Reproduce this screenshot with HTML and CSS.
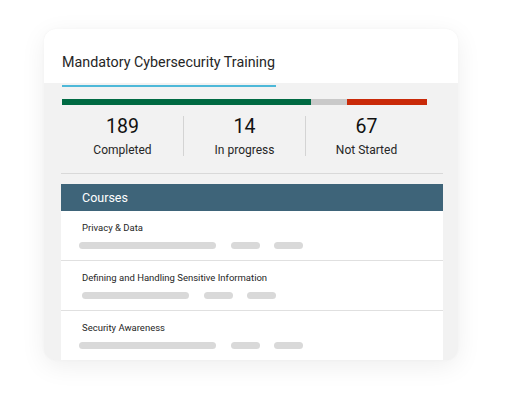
FILE: index.html
```html
<!DOCTYPE html>
<html>
<head>
<meta charset="utf-8">
<link rel="stylesheet" href="styles.css">
</head>
<body>
<div class="card">
  <div class="header">
    <div class="title">Mandatory Cybersecurity Training</div>
  </div>
  <div class="tab-line"></div>
  <div class="progress">
    <div class="seg green"></div>
    <div class="seg gray"></div>
    <div class="seg red"></div>
  </div>
  <div class="stats">
    <div class="stat">
      <div class="num">189</div>
      <div class="label">Completed</div>
    </div>
    <div class="stat divided">
      <div class="num">14</div>
      <div class="label">In progress</div>
    </div>
    <div class="stat divided">
      <div class="num">67</div>
      <div class="label">Not Started</div>
    </div>
  </div>
  <div class="rule"></div>
  <div class="courses">
    <div class="courses-head">Courses</div>
    <div class="row">
      <div class="row-title">Privacy &amp; Data</div>
      <div class="bars">
        <span class="bar long"></span><span class="bar short"></span><span class="bar short"></span>
      </div>
    </div>
    <div class="row">
      <div class="row-title">Defining and Handling Sensitive Information</div>
      <div class="bars inset">
        <span class="bar mid"></span><span class="bar short"></span><span class="bar short"></span>
      </div>
    </div>
    <div class="row">
      <div class="row-title">Security Awareness</div>
      <div class="bars">
        <span class="bar long"></span><span class="bar short"></span><span class="bar short"></span>
      </div>
    </div>
  </div>
</div>
</body>
</html>
```
FILE: styles.css
```css
html, body {
  margin: 0;
  padding: 0;
  background: #ffffff;
}
body {
  font-family: "Roboto", "Liberation Sans", sans-serif;
  color: #1e1e1e;
  width: 512px;
  height: 400px;
  overflow: hidden;
}
.card {
  margin: 29px 0 0 44px;
  width: 414px;
  height: 331px;
  background: #f2f2f2;
  border-radius: 12px;
  overflow: hidden;
  box-shadow: 0 6px 26px rgba(0, 0, 0, 0.07), 0 0 3px rgba(0, 0, 0, 0.03);
}
.header {
  background: #ffffff;
  height: 54px;
  padding-left: 18px;
  display: flex;
  align-items: center;
}
.title {
  font-size: 14.3px;
  color: #262626;
  padding-top: 11px;
}
.tab-line {
  margin: 2px 0 0 18px;
  width: 214px;
  height: 2px;
  background: #4db8d8;
}
.progress {
  display: flex;
  margin: 12px 0 0 18px;
  width: 365px;
  height: 6px;
}
.seg { height: 100%; }
.green { width: 249px; background: #006a43; }
.gray { width: 36px; background: #c9c9c9; }
.red { width: 80px; background: #c92a09; }
.stats {
  display: flex;
  margin: 11px 0 0 18px;
  width: 365px;
}
.stat {
  flex: 1;
  text-align: center;
  height: 40px;
}
.divided {
  border-left: 1px solid #d4d4d4;
}
.num {
  font-size: 19.5px;
  line-height: 22px;
  color: #111;
}
.label {
  font-size: 12px;
  line-height: 16px;
  margin-top: 4px;
  color: #262626;
}
.rule {
  margin: 17px 0 0 17px;
  width: 382px;
  height: 1px;
  background: #d9d9d9;
}
.courses {
  margin: 10px 0 0 17px;
  width: 382px;
  background: #ffffff;
}
.courses-head {
  height: 27px;
  line-height: 27px;
  background: #3e6479;
  color: #ffffff;
  font-size: 12.5px;
  padding-left: 21px;
}
.row {
  height: 49px;
  border-bottom: 1px solid #e0e0e0;
  box-sizing: content-box;
}
.row-title {
  font-size: 9.5px;
  line-height: 14px;
  padding: 10px 0 0 21px;
  color: #262626;
}
.bars {
  display: flex;
  margin-top: 7px;
  padding-left: 18px;
}
.bars.inset { padding-left: 21px; }
.bar {
  display: block;
  height: 7px;
  border-radius: 4px;
  background: #d9d9d9;
  margin-right: 14.5px;
}
.bar.long { width: 137px; }
.bar.mid { width: 107px; }
.bar.short { width: 29px; }
```
